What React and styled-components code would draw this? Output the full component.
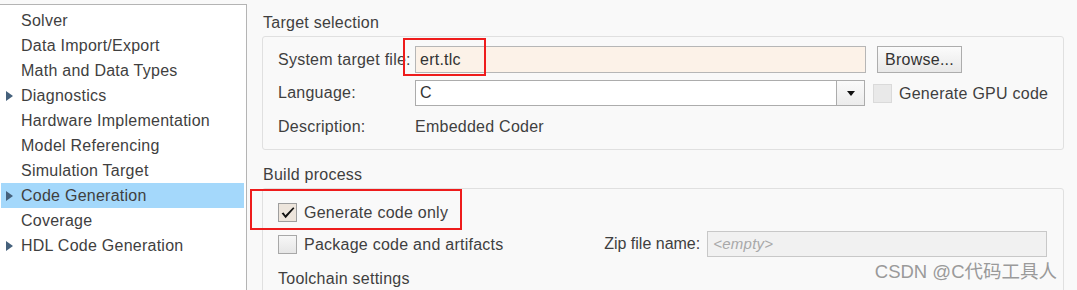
import React from "react";
import styled, { createGlobalStyle } from "styled-components";

const GlobalStyle = createGlobalStyle`
  html, body {
    margin: 0;
    padding: 0;
    background: #f9f9f9;
  }
  body {
    font-family: "Liberation Sans", Arial, sans-serif;
    font-size: 16px;
    letter-spacing: 0.25px;
    color: #3f3f3f;
  }
`;

const navItems = [
  { label: "Solver" },
  { label: "Data Import/Export" },
  { label: "Math and Data Types" },
  { label: "Diagnostics", expandable: true },
  { label: "Hardware Implementation" },
  { label: "Model Referencing" },
  { label: "Simulation Target" },
  { label: "Code Generation", expandable: true, selected: true },
  { label: "Coverage" },
  { label: "HDL Code Generation", expandable: true },
];

export default function App() {
  return (
    <>
      <GlobalStyle />
      <Page>
        <NavPanel>
          {navItems.map((item) => (
            <NavRow key={item.label} $selected={item.selected}>
              <Twisty>{item.expandable && <Arrow />}</Twisty>
              {item.label}
            </NavRow>
          ))}
        </NavPanel>

        <Content>
          <SectionTitle>Target selection</SectionTitle>
          <GroupBox>
            <FieldRow>
              <Label>System target file:</Label>
              <TextField $tone="edited">ert.tlc</TextField>
              <Button>Browse...</Button>
            </FieldRow>
            <FieldRow $gap={7}>
              <Label>Language:</Label>
              <Select>
                <SelectValue>C</SelectValue>
                <SelectArrow>
                  <Caret />
                </SelectArrow>
              </Select>
              <CheckRow $indent={8}>
                <CheckBox $disabled />
                <CheckLabel>Generate GPU code</CheckLabel>
              </CheckRow>
            </FieldRow>
            <FieldRow $gap={12} $height={18}>
              <Label>Description:</Label>
              <PlainValue>Embedded Coder</PlainValue>
            </FieldRow>
          </GroupBox>

          <SectionTitle $top={16}>Build process</SectionTitle>
          <GroupBox $open>
            <CheckRow>
              <CheckBox $checked>
                <svg width="17" height="17" viewBox="0 0 17 17">
                  <path
                    d="M2.6 9.2 L4.6 8.4 L6.4 11.2 L14.2 3.2 L15.4 4.2 L6.6 14.2 Z"
                    fill="#111"
                  />
                </svg>
              </CheckBox>
              <CheckLabel>Generate code only</CheckLabel>
            </CheckRow>
            <ZipRow>
              <CheckRow>
                <CheckBox />
                <CheckLabel>Package code and artifacts</CheckLabel>
              </CheckRow>
              <ZipGroup>
                <ZipLabel>Zip file name:</ZipLabel>
                <ZipField>&lt;empty&gt;</ZipField>
              </ZipGroup>
            </ZipRow>
            <SubHeading>Toolchain settings</SubHeading>
          </GroupBox>
        </Content>

        <Callout $x={403} $y={38} $w={83} $h={38} />
        <Callout $x={250} $y={189} $w={212} $h={41} />
        <Watermark>CSDN @C代码工具人</Watermark>
      </Page>
    </>
  );
}

const Page = styled.div`
  position: relative;
  display: flex;
  width: 1077px;
  height: 290px;
  overflow: hidden;
  background: #f9f9f9;
`;

const NavPanel = styled.div`
  width: 243px;
  flex-shrink: 0;
  margin-top: 4px;
  padding: 3px 2px 0 1px;
  background: #ffffff;
  border-top: 1px solid #b4b4b4;
  border-right: 1px solid #b4b4b4;
`;

const NavRow = styled.div`
  display: flex;
  align-items: center;
  height: 25px;
  background: ${(p) => (p.$selected ? "#a4d8fb" : "transparent")};
  white-space: nowrap;
`;

const Twisty = styled.span`
  display: flex;
  align-items: center;
  width: 20px;
  height: 25px;
  padding-left: 5px;
  box-sizing: border-box;
`;

const Arrow = styled.span`
  width: 0;
  height: 0;
  border-top: 5px solid transparent;
  border-bottom: 5px solid transparent;
  border-left: 7px solid #45617c;
`;

const Content = styled.div`
  flex: 1;
  padding: 0 14px 0 15px;
`;

const SectionTitle = styled.div`
  margin-top: ${(p) => p.$top ?? 14}px;
  margin-bottom: 4px;
  padding-left: 1px;
  line-height: 18px;
`;

const GroupBox = styled.div`
  padding: ${(p) => (p.$open ? "14px 16px 40px 15px" : "9px 15px 13px 15px")};
  border: 1px solid #e0e0e0;
  border-radius: 3px;
  background: #f9f9f9;
`;

const FieldRow = styled.div`
  display: flex;
  align-items: center;
  margin-top: ${(p) => p.$gap ?? 0}px;
  height: ${(p) => (p.$height ? `${p.$height}px` : "auto")};
`;

const Label = styled.div`
  width: 137px;
  flex-shrink: 0;
  white-space: nowrap;
  overflow: visible;
`;

const TextField = styled.div`
  box-sizing: border-box;
  width: 451px;
  height: 27px;
  padding-left: 4px;
  line-height: 25px;
  border: 1px solid #b6b6b6;
  background: ${(p) => (p.$tone === "edited" ? "#fcf2e8" : "#ffffff")};
  color: #333333;
`;

const Button = styled.div`
  box-sizing: border-box;
  width: 85px;
  height: 27px;
  margin-left: 11px;
  text-align: center;
  line-height: 25px;
  border: 1px solid #adadad;
  background: linear-gradient(#fbfbfb, #e8e8e8);
  color: #333333;
`;

const Select = styled.div`
  box-sizing: border-box;
  display: flex;
  width: 450px;
  height: 26px;
  border: 1px solid #acacac;
  background: #ffffff;
`;

const SelectValue = styled.div`
  flex: 1;
  padding-left: 4px;
  line-height: 24px;
  color: #333333;
`;

const SelectArrow = styled.div`
  display: flex;
  align-items: center;
  justify-content: center;
  width: 27px;
  border-left: 1px solid #acacac;
  background: linear-gradient(#fafafa, #ececec);
`;

const Caret = styled.span`
  width: 0;
  height: 0;
  border-left: 4px solid transparent;
  border-right: 4px solid transparent;
  border-top: 5px solid #111111;
`;

const CheckRow = styled.div`
  display: flex;
  align-items: center;
  margin-left: ${(p) => p.$indent ?? 0}px;
`;

const CheckBox = styled.span`
  box-sizing: border-box;
  display: flex;
  align-items: center;
  justify-content: center;
  width: 19px;
  height: 19px;
  flex-shrink: 0;
  border: 1px solid
    ${(p) => (p.$disabled ? "#dadada" : p.$checked ? "#9e9e9e" : "#a8a8a8")};
  background: ${(p) =>
    p.$disabled
      ? "#e9e9e9"
      : p.$checked
      ? "#ede5dc"
      : "linear-gradient(#f7f7f7, #e6e6e6)"};
`;

const CheckLabel = styled.span`
  margin-left: 7px;
  line-height: 19px;
  white-space: nowrap;
`;

const PlainValue = styled.div``;

const ZipRow = styled.div`
  display: flex;
  align-items: center;
  justify-content: space-between;
  margin-top: 9px;
`;

const ZipGroup = styled.div`
  display: flex;
  align-items: center;
`;

const ZipLabel = styled.span`
  margin-right: 7px;
  letter-spacing: 0;
`;

const ZipField = styled.div`
  box-sizing: border-box;
  width: 340px;
  height: 26px;
  padding-left: 5px;
  line-height: 24px;
  border: 1px solid #c8c8c8;
  background: #f1f1f1;
  color: #a8a8a8;
  font-size: 15px;
  font-style: italic;
`;

const SubHeading = styled.div`
  margin-top: 13px;
  line-height: 18px;
`;

const Callout = styled.div`
  position: absolute;
  left: ${(p) => p.$x}px;
  top: ${(p) => p.$y}px;
  width: ${(p) => p.$w}px;
  height: ${(p) => p.$h}px;
  box-sizing: border-box;
  border: 2px solid #ee1c1c;
  pointer-events: none;
`;

const Watermark = styled.div`
  position: absolute;
  right: 20px;
  top: 261px;
  font-family: "Liberation Sans", "Noto Sans CJK SC", sans-serif;
  font-size: 18.5px;
  letter-spacing: 0;
  line-height: 22px;
  color: #9a9a9a;
  white-space: nowrap;
  pointer-events: none;
`;
